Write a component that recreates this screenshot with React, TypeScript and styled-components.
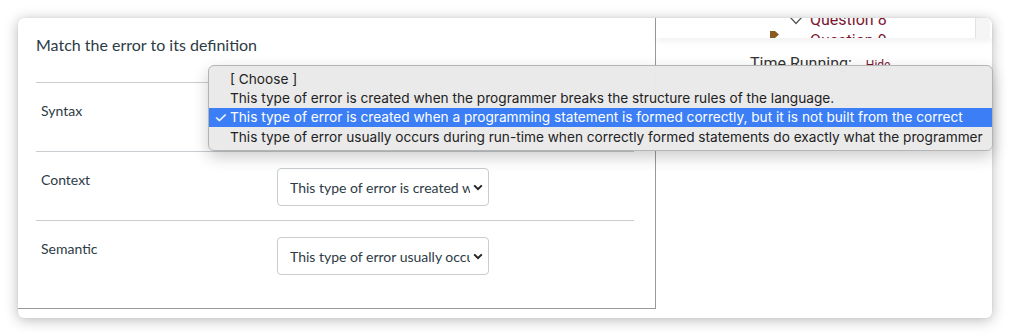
import styled, { createGlobalStyle } from 'styled-components';

const GlobalStyle = createGlobalStyle`
  html, body {
    margin: 0;
    padding: 0;
    background: #ffffff;
  }
  body {
    font-family: Lato, 'Liberation Sans', sans-serif;
    color: #2d3b45;
  }
`;

const MATCHES = [
  { label: 'Syntax', value: 'This type of error is created when the programmer breaks' },
  { label: 'Context', value: 'This type of error is created when a programming statement' },
  { label: 'Semantic', value: 'This type of error usually occurs during run-time' },
];

const OPTIONS = [
  '[ Choose ]',
  'This type of error is created when the programmer breaks the structure rules of the language.',
  'This type of error is created when a programming statement is formed correctly, but it is not built from the correct',
  'This type of error usually occurs during run-time when correctly formed statements do exactly what the programmer',
];

const SELECTED = 2;

export default function App() {
  return (
    <>
      <GlobalStyle />
      <Page>
        <Window>
          <QuestionPanel>
            <Title>Match the error to its definition</Title>
            <Rows>
              {MATCHES.map((m) => (
                <Row key={m.label}>
                  <Label>{m.label}</Label>
                  <Select>
                    <SelectText>{m.value}</SelectText>
                    <Chevron viewBox="0 0 10 7">
                      <path d="M1.2 1.4 L5 5.2 L8.8 1.4" />
                    </Chevron>
                  </Select>
                </Row>
              ))}
            </Rows>
          </QuestionPanel>
          <SidePanel>
            <NavBox>
              <NavList>
                <NavItem>
                  <Slot>
                    <NavChevron viewBox="0 0 14 9">
                      <path d="M1 1 L7 7.5 L13 1" />
                    </NavChevron>
                  </Slot>
                  <NavLink>Question 8</NavLink>
                </NavItem>
                <NavItem>
                  <Slot>
                    <Flag viewBox="0 0 9 10">
                      <path d="M0 0 H5 L9 3.5 L5 7 H2 V10 H0 Z" />
                    </Flag>
                  </Slot>
                  <NavLink>Question 9</NavLink>
                </NavItem>
              </NavList>
              <ScrollTrack />
            </NavBox>
            <Timer>
              Time Running:<HideLink>Hide</HideLink>
            </Timer>
          </SidePanel>
          <Menu>
            {OPTIONS.map((o, i) => (
              <MenuItem key={i} $active={i === SELECTED}>
                <Check>{i === SELECTED ? '✓' : ''}</Check>
                {o}
              </MenuItem>
            ))}
          </Menu>
        </Window>
      </Page>
    </>
  );
}

const Page = styled.div`
  width: 1010px;
  height: 336px;
  padding: 18px;
  box-sizing: border-box;
  overflow: hidden;
`;

const Window = styled.div`
  position: relative;
  width: 974px;
  height: 300px;
  background: #fff;
  border-radius: 6px;
  box-shadow: 0 2px 14px rgba(0, 0, 0, 0.28), 0 0 2px rgba(0, 0, 0, 0.08);
  display: flex;
  align-items: flex-start;
`;

const QuestionPanel = styled.div`
  width: 638px;
  height: 291px;
  box-sizing: border-box;
  border-right: 1px solid #9a9a9a;
  border-bottom: 1px solid #9a9a9a;
  padding: 17px 21px 0 18px;
`;

const Title = styled.div`
  font-size: 16px;
  line-height: 20px;
  color: #2d3b45;
  padding-bottom: 27px;
  border-bottom: 1px solid #c7cdd1;
`;

const Rows = styled.div`
  display: flex;
  flex-direction: column;
`;

const Row = styled.div`
  display: grid;
  grid-template-columns: 236px 212px;
  padding: 16px 0 14px 5px;
  border-bottom: 1px solid #c7cdd1;
  &:last-child {
    border-bottom: none;
  }
`;

const Label = styled.div`
  font-size: 14px;
  line-height: 20px;
  padding-top: 2px;
  color: #2d3b45;
`;

const Select = styled.div`
  height: 38px;
  box-sizing: border-box;
  border: 1px solid #c7cdd1;
  border-radius: 4px;
  background: #fff;
  display: flex;
  align-items: center;
  padding: 0 5px 0 12px;
`;

const SelectText = styled.div`
  flex: 1;
  overflow: hidden;
  white-space: nowrap;
  font-size: 14px;
  color: #2d3b45;
`;

const Chevron = styled.svg`
  flex: none;
  width: 10px;
  height: 7px;
  margin-left: 3px;
  fill: none;
  stroke: #222;
  stroke-width: 2;
`;

const SidePanel = styled.div`
  flex: 1;
  display: flex;
  flex-direction: column;
  font-family: Roboto, 'Liberation Sans', sans-serif;
`;

const NavBox = styled.div`
  height: 20px;
  display: flex;
  overflow: hidden;
  border-top-right-radius: 6px;
  box-shadow: 0 3px 6px rgba(0, 0, 0, 0.06);
`;

const NavList = styled.div`
  flex: 1;
  margin-top: -9px;
  padding-left: 114px;
`;

const NavItem = styled.div`
  display: flex;
  align-items: center;
  height: 21px;
`;

const Slot = styled.div`
  flex: none;
  width: 22px;
  align-self: stretch;
  display: flex;
  align-items: center;
`;

const NavChevron = styled.svg`
  flex: none;
  width: 14px;
  height: 9px;
  margin-left: 19px;
  margin-top: 2px;
  fill: none;
  stroke: #555;
  stroke-width: 1.3;
`;

const Flag = styled.svg`
  flex: none;
  width: 9px;
  height: 10px;
  align-self: flex-start;
  margin-top: 1px;
  fill: #8b5a22;
`;

const NavLink = styled.span`
  margin-left: 18px;
  font-size: 16px;
  line-height: 21px;
  color: #7b1730;
`;

const ScrollTrack = styled.div`
  width: 14px;
  margin-right: 2px;
  background: #f5f5f5;
  border-left: 1px solid #e2e2e2;
`;

const Timer = styled.div`
  margin-top: 16px;
  padding-left: 94px;
  font-size: 16px;
  line-height: 20px;
  color: #333;
`;

const HideLink = styled.span`
  margin-left: 14px;
  font-size: 12px;
  color: #7b1730;
`;

const Menu = styled.div`
  position: absolute;
  left: 190px;
  top: 47px;
  width: 785px;
  box-sizing: border-box;
  padding: 3px 0 4px;
  background: rgba(234, 234, 234, 0.98);
  border: 1px solid #b4b4b4;
  border-radius: 6px;
  box-shadow: 0 6px 16px rgba(0, 0, 0, 0.2);
  font-family: Inter, 'Noto Sans', sans-serif;
  font-size: 13.65px;
  z-index: 2;
`;

const MenuItem = styled.div<{ $active: boolean }>`
  display: flex;
  align-items: center;
  height: 19.3px;
  white-space: nowrap;
  overflow: hidden;
  color: ${({ $active }) => ($active ? '#fff' : '#222')};
  background: ${({ $active }) => ($active ? '#3b7ef5' : 'transparent')};
`;

const Check = styled.span`
  width: 21px;
  padding-left: 5px;
  box-sizing: border-box;
  flex: none;
  font-size: 15px;
`;
